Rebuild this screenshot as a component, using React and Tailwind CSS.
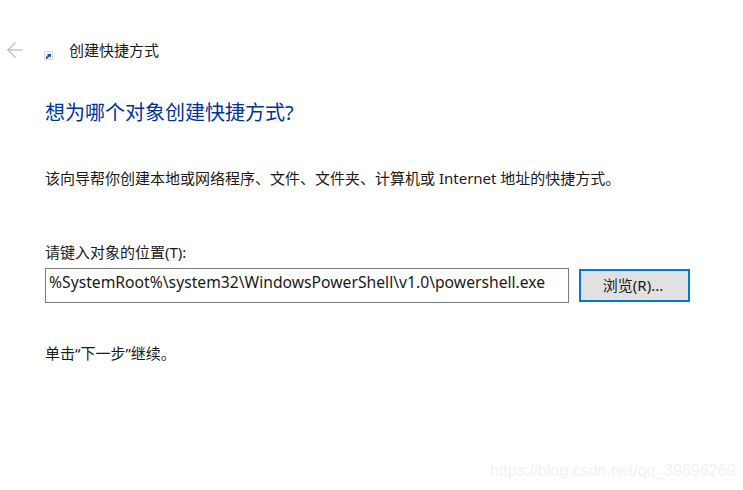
import React from 'react';
import { ArrowLeft } from 'lucide-react';

const font = '"Noto Sans", "Noto Sans CJK SC", sans-serif';

const ShortcutIcon = () => (
  <svg width="9" height="9" viewBox="0 0 9 9" className="block">
    <rect x="0" y="0" width="9" height="9" fill="#d5dce8" />
    <rect x="1" y="1" width="7" height="7" fill="#f7f9fc" />
    <rect x="1" y="5" width="3" height="3" fill="#fff" />
    <path d="M2 8 V5.5 H3.5 V3 H7 V6.5 L5.8 5.3 L3.6 7.4 Z" fill="#1d4f9c" />
  </svg>
);

export default function App() {
  return (
    <div className="relative w-[743px] h-[490px] overflow-hidden bg-white text-[#1a1a1a]" style={{ fontFamily: font }}>
      <div className="flex items-center h-[20px] mt-[40px] pl-[3px]">
        <ArrowLeft size={24} strokeWidth={1.5} className="text-[#c4c4c4]" />
        <div className="ml-[17px] mt-[11px]"><ShortcutIcon /></div>
        <span className="ml-[16px] text-[15px] leading-[20px]">创建快捷方式</span>
      </div>

      <h1 className="mt-[39px] ml-[45px] text-[20px] leading-[28px] text-[#003399] font-normal">想为哪个对象创建快捷方式?</h1>

      <p className="mt-[41px] ml-[45px] text-[15px] leading-[20px]">该向导帮你创建本地或网络程序、文件、文件夹、计算机或 Internet 地址的快捷方式。</p>

      <p className="mt-[54px] ml-[45px] text-[15px] leading-[20px]">请键入对象的位置(T):</p>

      <div className="flex mt-[6px] ml-[45px] items-center gap-[10px]">
        <div className="w-[524px] h-[35px] border border-[#7a7a7a] pl-[3px] text-[15.7px] leading-[26px] whitespace-nowrap">
          %SystemRoot%\system32\WindowsPowerShell\v1.0\powershell.exe
        </div>
        <button className="w-[111px] h-[33px] bg-[#e1e1e1] border-2 border-[#0078d7] text-[15px] leading-[20px] pr-[3px] pb-[2px]">浏览(R)...</button>
      </div>

      <p className="mt-[40px] ml-[45px] text-[15px] leading-[20px]">单击“下一步”继续。</p>

      <span className="absolute left-[490px] top-[461px] text-[16px] leading-[20px] text-[#f2f2f2]" style={{ fontFamily: '"Liberation Sans", sans-serif' }}>https://blog.csdn.net/qq_39696269</span>
    </div>
  );
}
